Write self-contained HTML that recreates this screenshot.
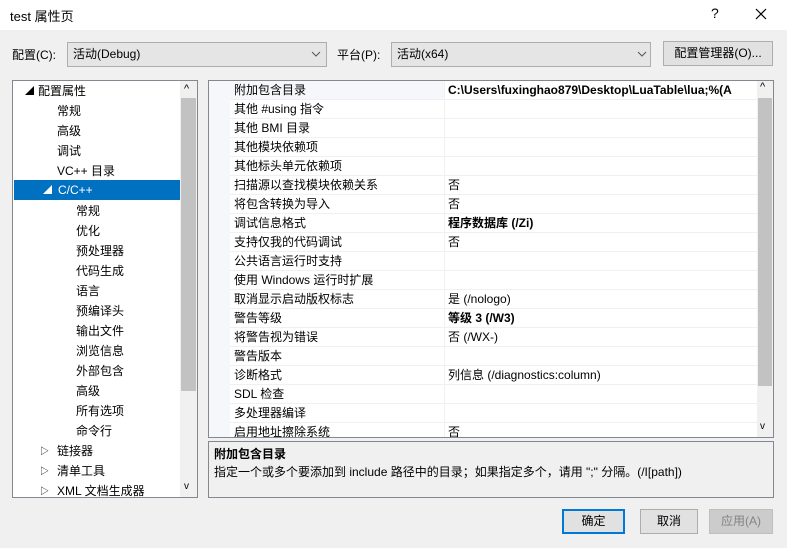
<!DOCTYPE html><html><head><meta charset="utf-8"><style>
*{margin:0;padding:0;box-sizing:border-box}
body{width:787px;height:548px;background:#f0f0f0;font-family:"Liberation Sans","Noto Sans CJK SC",sans-serif;font-size:12px;color:#000;position:relative;overflow:hidden}
.a{position:absolute;white-space:nowrap}
.title{left:0;top:0;width:787px;height:30px;background:#fff}
.combo{background:#e5e5e5;border:1px solid #adadad;height:25px;line-height:23px;padding-left:5px}
.btn{background:#e1e1e1;border:1px solid #adadad;height:25px;line-height:23px;text-align:center}
.tree{left:12px;top:80px;width:186px;height:418px;background:#fff;border:1px solid #828790}
.tree div{position:absolute;height:20px;line-height:20px}
.grid{left:208px;top:80px;width:566px;height:358px;background:#fff;border:1px solid #828790;overflow:hidden}
.row{position:absolute;left:21px;width:527px;height:19px;border-bottom:1px solid #f0f0f0;line-height:18px}
.row span{position:absolute}
.n{left:4px}.v{left:218px}
.sep{position:absolute;left:235px;top:0;width:1px;height:356px;background:#f0f0f0}
</style></head><body>
<div class="a title"></div>
<div class="a" style="left:10px;top:6px;font-size:13px">test 属性页</div>
<div class="a" style="left:711px;top:5px;font-size:14px">?</div>
<svg class="a" style="left:755px;top:8px" width="12" height="12"><path d="M1 1L11 11M11 1L1 11" stroke="#000" stroke-width="1.2"/></svg>
<div class="a" style="left:12px;top:46px">配置(C):</div>
<div class="a combo" style="left:67px;top:42px;width:260px">活动(Debug)</div>
<svg class="a" style="left:311px;top:51px" width="10" height="6"><path d="M1 1L5 5L9 1" stroke="#555" fill="none"/></svg>
<div class="a" style="left:337px;top:46px">平台(P):</div>
<div class="a combo" style="left:391px;top:42px;width:260px">活动(x64)</div>
<svg class="a" style="left:637px;top:51px" width="10" height="6"><path d="M1 1L5 5L9 1" stroke="#555" fill="none"/></svg>
<div class="a btn" style="left:663px;top:41px;width:110px">配置管理器(O)...</div>

<div class="a tree">
<div style="left:12px;top:0;font-size:9px">◢</div><div style="left:25px;top:0">配置属性</div>
<div style="left:44px;top:20px">常规</div>
<div style="left:44px;top:40px">高级</div>
<div style="left:44px;top:60px">调试</div>
<div style="left:44px;top:80px">VC++ 目录</div>
<div style="left:1px;top:99px;width:166px;background:#0070c0;color:#fff"><span style="position:absolute;left:29px;font-size:9px">◢</span><span style="position:absolute;left:44px">C/C++</span></div>
<div style="left:63px;top:120px">常规</div>
<div style="left:63px;top:140px">优化</div>
<div style="left:63px;top:160px">预处理器</div>
<div style="left:63px;top:180px">代码生成</div>
<div style="left:63px;top:200px">语言</div>
<div style="left:63px;top:220px">预编译头</div>
<div style="left:63px;top:240px">输出文件</div>
<div style="left:63px;top:260px">浏览信息</div>
<div style="left:63px;top:280px">外部包含</div>
<div style="left:63px;top:300px">高级</div>
<div style="left:63px;top:320px">所有选项</div>
<div style="left:63px;top:340px">命令行</div>
<div style="left:27px;top:360px;font-size:9px">▷</div><div style="left:44px;top:360px">链接器</div>
<div style="left:27px;top:380px;font-size:9px">▷</div><div style="left:44px;top:380px">清单工具</div>
<div style="left:27px;top:400px;font-size:9px">▷</div><div style="left:44px;top:400px">XML 文档生成器</div>
<div style="left:167px;top:0;width:17px;height:416px;background:#f0f0f0"></div>
<div style="left:168px;top:17px;width:15px;height:293px;background:#c2c2c2"></div>
<div style="left:171px;top:-2px;font-size:11px">^</div>
<div style="left:171px;top:396px;font-size:10px">v</div>
</div>

<div class="a grid">
<div style="position:absolute;left:0;top:0;width:21px;height:356px;background:#f5f7fb"></div>
<div class="row" style="top:0;background:#fff"><span class="n" style="left:0;width:214px;background:#f5f7fb;padding-left:4px;height:18px">附加包含目录</span><span class="v" style="font-weight:bold">C:\Users\fuxinghao879\Desktop\LuaTable\lua;%(A</span></div>
<div class="row" style="top:19px"><span class="n">其他 #using 指令</span></div>
<div class="row" style="top:38px"><span class="n">其他 BMI 目录</span></div>
<div class="row" style="top:57px"><span class="n">其他模块依赖项</span></div>
<div class="row" style="top:76px"><span class="n">其他标头单元依赖项</span></div>
<div class="row" style="top:95px"><span class="n">扫描源以查找模块依赖关系</span><span class="v">否</span></div>
<div class="row" style="top:114px"><span class="n">将包含转换为导入</span><span class="v">否</span></div>
<div class="row" style="top:133px"><span class="n">调试信息格式</span><span class="v" style="font-weight:bold">程序数据库 (/Zi)</span></div>
<div class="row" style="top:152px"><span class="n">支持仅我的代码调试</span><span class="v">否</span></div>
<div class="row" style="top:171px"><span class="n">公共语言运行时支持</span></div>
<div class="row" style="top:190px"><span class="n">使用 Windows 运行时扩展</span></div>
<div class="row" style="top:209px"><span class="n">取消显示启动版权标志</span><span class="v">是 (/nologo)</span></div>
<div class="row" style="top:228px"><span class="n">警告等级</span><span class="v" style="font-weight:bold">等级 3 (/W3)</span></div>
<div class="row" style="top:247px"><span class="n">将警告视为错误</span><span class="v">否 (/WX-)</span></div>
<div class="row" style="top:266px"><span class="n">警告版本</span></div>
<div class="row" style="top:285px"><span class="n">诊断格式</span><span class="v">列信息 (/diagnostics:column)</span></div>
<div class="row" style="top:304px"><span class="n">SDL 检查</span></div>
<div class="row" style="top:323px"><span class="n">多处理器编译</span></div>
<div class="row" style="top:342px"><span class="n">启用地址擦除系统</span><span class="v">否</span></div>
<div class="sep" style="left:235px"></div>
<div style="position:absolute;left:548px;top:0;width:16px;height:356px;background:#f0f0f0"></div>
<div style="position:absolute;left:549px;top:17px;width:14px;height:288px;background:#c2c2c2"></div>
<div style="position:absolute;left:551px;top:0;font-size:11px">^</div>
<div style="position:absolute;left:551px;top:340px;font-size:10px">v</div>
</div>

<div class="a" style="left:208px;top:441px;width:566px;height:57px;border:1px solid #828790;background:#f0f0f0"></div>
<div class="a" style="left:214px;top:445px;font-weight:bold">附加包含目录</div>
<div class="a" style="left:214px;top:463px">指定一个或多个要添加到 include 路径中的目录；如果指定多个，请用 ";" 分隔。(/I[path])</div>

<div class="a btn" style="left:562px;top:509px;width:63px;border:2px solid #0078d7;line-height:21px">确定</div>
<div class="a btn" style="left:640px;top:509px;width:58px">取消</div>
<div class="a btn" style="left:709px;top:509px;width:64px;background:#ccc;border-color:#bfbfbf;color:#838383">应用(A)</div>
</body></html>
